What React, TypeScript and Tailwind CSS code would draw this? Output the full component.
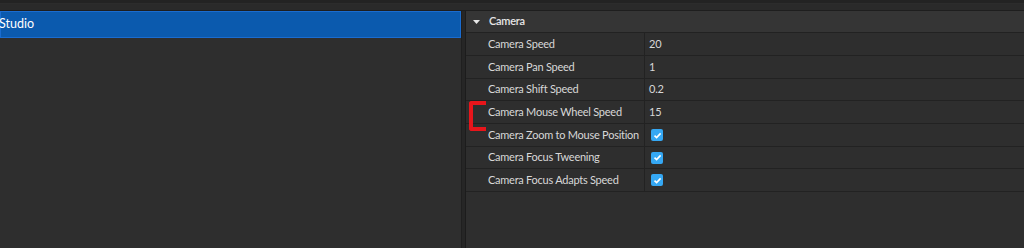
import React from 'react';

const rows = [
  { label: 'Camera Speed', value: '20', h: 'h-[23px]' },
  { label: 'Camera Pan Speed', value: '1', h: 'h-[23px]' },
  { label: 'Camera Shift Speed', value: '0.2', h: 'h-[22px]' },
  { label: 'Camera Mouse Wheel Speed', value: '15', h: 'h-[23px]' },
  { label: 'Camera Zoom to Mouse Position', check: true, h: 'h-[23px]' },
  { label: 'Camera Focus Tweening', check: true, h: 'h-[22px]' },
  { label: 'Camera Focus Adapts Speed', check: true, h: 'h-[23px]' },
];

const Check = () => (
  <div className="w-[12px] h-[12px] rounded-[2px] bg-[#35a8f4] flex items-center justify-center">
    <svg width="9" height="9" viewBox="0 0 9 9" fill="none">
      <path d="M1.5 4.6 L3.6 6.6 L7.6 2.4" stroke="white" strokeWidth="1.6" />
    </svg>
  </div>
);

export default function App() {
  return (
    <div
      className="w-[1024px] h-[248px] bg-[#242424] flex flex-col overflow-hidden text-[11px] tracking-[-0.25px] text-[#d8d8d8]"
      style={{ fontFamily: '"Source Sans Pro", Lato, sans-serif' }}
    >
      <div className="h-[4px] bg-[#232323] border-b border-[#2c2c2c]" />
      <div className="h-[7px] bg-[#2a2a2a] border-b border-[#1e1e1e]" />
      <div className="flex flex-1">
        {/* explorer list */}
        <div className="w-[462px] bg-[#2e2e2e] border-r border-[#1f1f1f]">
          <div className="h-[27px] bg-[#0b5aae] border border-[#1a6cd0] flex items-center text-[12.5px] tracking-normal text-white">
            <span className="-ml-[2px]">Studio</span>
          </div>
        </div>
        <div className="w-[4px] bg-[#262626] border-r border-[#1c1c1c]" />
        {/* properties */}
        <div className="flex-1 bg-[#2e2e2e] flex flex-col">
          <div className="h-[22px] bg-[#353535] border-b border-[#222] flex items-center">
            <svg width="22" height="8" viewBox="0 0 22 8" className="ml-[1px]">
              <path d="M6 2 L13 2 L9.5 6 Z" fill="#e8e8e8" />
            </svg>
            <span className="font-semibold text-[#e6e6e6]">Camera</span>
          </div>
          {rows.map((r) => (
            <div key={r.label} className={`${r.h} flex border-b border-[#222]`}>
              <div className="w-[179px] border-r border-[#222] flex items-center pl-[22px] relative">
                {r.label === 'Camera Mouse Wheel Speed' && (
                  <div className="absolute left-[3px] top-[0px] w-[17px] h-[30px] border-[4px] border-r-0 border-[#e8151b] rounded-l-[3px]" />
                )}
                <span className="whitespace-nowrap">{r.label}</span>
              </div>
              <div className="flex-1 flex items-center pl-[4px]">
                {r.check ? <div className="ml-[2px]"><Check /></div> : <span>{r.value}</span>}
              </div>
            </div>
          ))}
        </div>
      </div>
    </div>
  );
}
